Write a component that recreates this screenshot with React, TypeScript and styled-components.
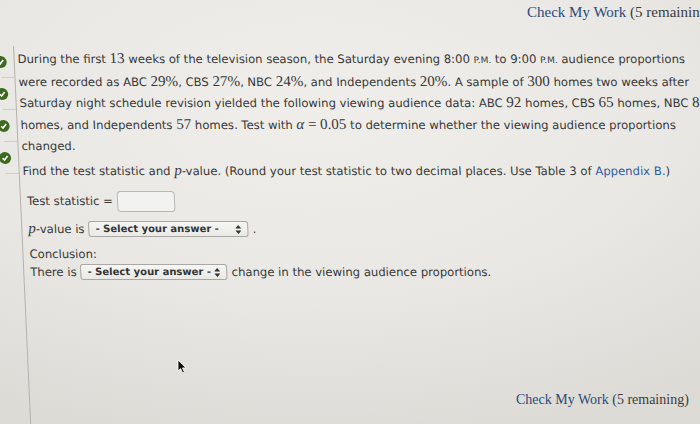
import React from "react";
import styled, { createGlobalStyle } from "styled-components";

const Global = createGlobalStyle`
  html, body { margin: 0; padding: 0; }
  body { background: #e4e3df; overflow: hidden; }
`;

const Page = styled.div`
  position: relative;
  width: 700px;
  height: 424px;
  overflow: hidden;
  background: radial-gradient(ellipse 90% 80% at 45% 25%, #efeeeb 0%, #e9e8e4 55%, #dcdbd6 100%);
  font-family: "DejaVu Sans", Verdana, sans-serif;
  color: #383838;
`;

const Header = styled.div`
  height: 24px;
  padding-left: 527px;
  white-space: nowrap;
  display: flex;
  align-items: center;
`;

const CheckWork = styled.div<{ $size: number }>`
  font-family: "Liberation Serif", "Times New Roman", serif;
  font-size: ${(p) => p.$size}px;
  color: #3c3c3c;
  white-space: nowrap;
`;

const CheckLink = styled.span`
  color: #2b4a7c;
`;

const Question = styled.div`
  margin-top: 22px;
  display: flex;
  height: 378px;
  transform: skewX(2.6deg);
  transform-origin: top left;
`;

const Sidebar = styled.div`
  width: 13px;
  flex: none;
  border-right: 1px solid #b4b3ae;
  display: flex;
  flex-direction: column;
`;

const Step = styled.div`
  height: 31px;
  border-bottom: 1px solid #cfceca;
  display: flex;
  align-items: center;
`;

const CheckDot = styled.div`
  width: 12px;
  height: 12px;
  margin-left: -6px;
  border-radius: 50%;
  background: #3c6b1f;
  display: flex;
  align-items: center;
  justify-content: center;
`;

const Content = styled.div`
  padding-left: 3px;
  display: flex;
  flex-direction: column;
  font-size: 11.65px;
`;

const Para = styled.p`
  margin: 3px 0 0;
  line-height: 21.5px;
  white-space: nowrap;
`;

const Num = styled.span`
  font-family: "Liberation Serif", "Times New Roman", serif;
  font-size: 15px;
  line-height: 1;
`;

const SmallCaps = styled.span`
  font-size: 9px;
`;

const Alpha = styled.span`
  font-family: "Liberation Serif", "Times New Roman", serif;
  font-style: italic;
  font-size: 15px;
  line-height: 1;
`;

const Instr = styled.p`
  margin: 3px 0 0;
  line-height: 20px;
  white-space: nowrap;
`;

const Link = styled.span`
  color: #2f5e9e;
`;

const Row = styled.div<{ $top: number }>`
  margin-top: ${(p) => p.$top}px;
  padding-left: 3px;
  display: flex;
  align-items: center;
  gap: 4px;
  line-height: 16px;
  white-space: nowrap;
`;

const PItalic = styled.span`
  font-family: "Liberation Serif", "Times New Roman", serif;
  font-style: italic;
  font-size: 15px;
  line-height: 1;
`;

const Input = styled.div`
  width: 56px;
  height: 19px;
  border: 1px solid #b9b8b4;
  border-radius: 4px;
  background: #f2f2f0;
`;

const Select = styled.div<{ $w: number }>`
  width: ${(p) => p.$w}px;
  height: 16px;
  box-sizing: border-box;
  border: 1px solid #a9a8a4;
  border-radius: 3px;
  background: linear-gradient(#f6f6f4, #e9e9e6);
  display: flex;
  align-items: center;
  justify-content: space-between;
  padding: 0 6px 0 6px;
  font-size: 10px;
  font-weight: bold;
  color: #333;
`;

const Label = styled.div`
  margin-top: 9px;
  padding-left: 3px;
  line-height: 16px;
`;

const Footer = styled.div`
  position: absolute;
  left: 516px;
  top: 392px;
`;

const Cursor = styled.svg`
  position: absolute;
  left: 177px;
  top: 359px;
`;

const Arrows = () => (
  <svg width="6" height="9" viewBox="0 0 6 9">
    <path d="M3 0 L6 3.5 H0 Z M3 9 L6 5.5 H0 Z" fill="#333" />
  </svg>
);

const Tick = () => (
  <svg width="8" height="8" viewBox="0 0 8 8">
    <path d="M1.5 4.2 L3.3 6 L6.6 2" stroke="#fff" strokeWidth="1.6" fill="none" />
  </svg>
);

export default function App() {
  return (
    <Page>
      <Global />
      <Header>
        <CheckWork $size={15}>
          <CheckLink>Check My Work</CheckLink> (5 remaining)
        </CheckWork>
      </Header>
      <Question>
        <Sidebar>
          {[0, 1, 2, 3].map((i) => (
            <Step key={i}>
              <CheckDot>
                <Tick />
              </CheckDot>
            </Step>
          ))}
        </Sidebar>
        <Content>
          <Para>
            During the first <Num>13</Num> weeks of the television season, the Saturday evening 8:00{" "}
            <SmallCaps>P.M.</SmallCaps> to 9:00 <SmallCaps>P.M.</SmallCaps> audience proportions
            <br />
            were recorded as ABC <Num>29%</Num>, CBS <Num>27%</Num>, NBC <Num>24%</Num>, and Independents{" "}
            <Num>20%</Num>. A sample of <Num>300</Num> homes two weeks after
            <br />
            Saturday night schedule revision yielded the following viewing audience data: ABC <Num>92</Num> homes, CBS{" "}
            <Num>65</Num> homes, NBC <Num>86</Num>
            <br />
            homes, and Independents <Num>57</Num> homes. Test with <Alpha>α</Alpha> <Num>= 0.05</Num> to determine
            whether the viewing audience proportions
            <br />
            changed.
          </Para>
          <Instr>
            Find the test statistic and <PItalic>p</PItalic>-value. (Round your test statistic to two decimal places.
            Use Table 3 of <Link>Appendix B.</Link>)
          </Instr>
          <Row $top={10}>
            Test statistic = <Input />
          </Row>
          <Row $top={9.5}>
            <span>
              <PItalic>p</PItalic>-value is
            </span>
            <Select $w={160}>
              - Select your answer -<Arrows />
            </Select>
            .
          </Row>
          <Label>Conclusion:</Label>
          <Row $top={2}>
            There is
            <Select $w={147}>
              - Select your answer -<Arrows />
            </Select>
            change in the viewing audience proportions.
          </Row>
        </Content>
      </Question>
      <Footer>
        <CheckWork $size={14}>
          <CheckLink>Check My Work</CheckLink> (5 remaining)
        </CheckWork>
      </Footer>
      <Cursor width="11" height="15" viewBox="0 0 11 15">
        <path d="M1 1 L1 12 L3.6 9.6 L5.6 14 L7.4 13.2 L5.5 8.9 L9 8.9 Z" fill="#111" stroke="#fff" strokeWidth="0.8" />
      </Cursor>
    </Page>
  );
}
